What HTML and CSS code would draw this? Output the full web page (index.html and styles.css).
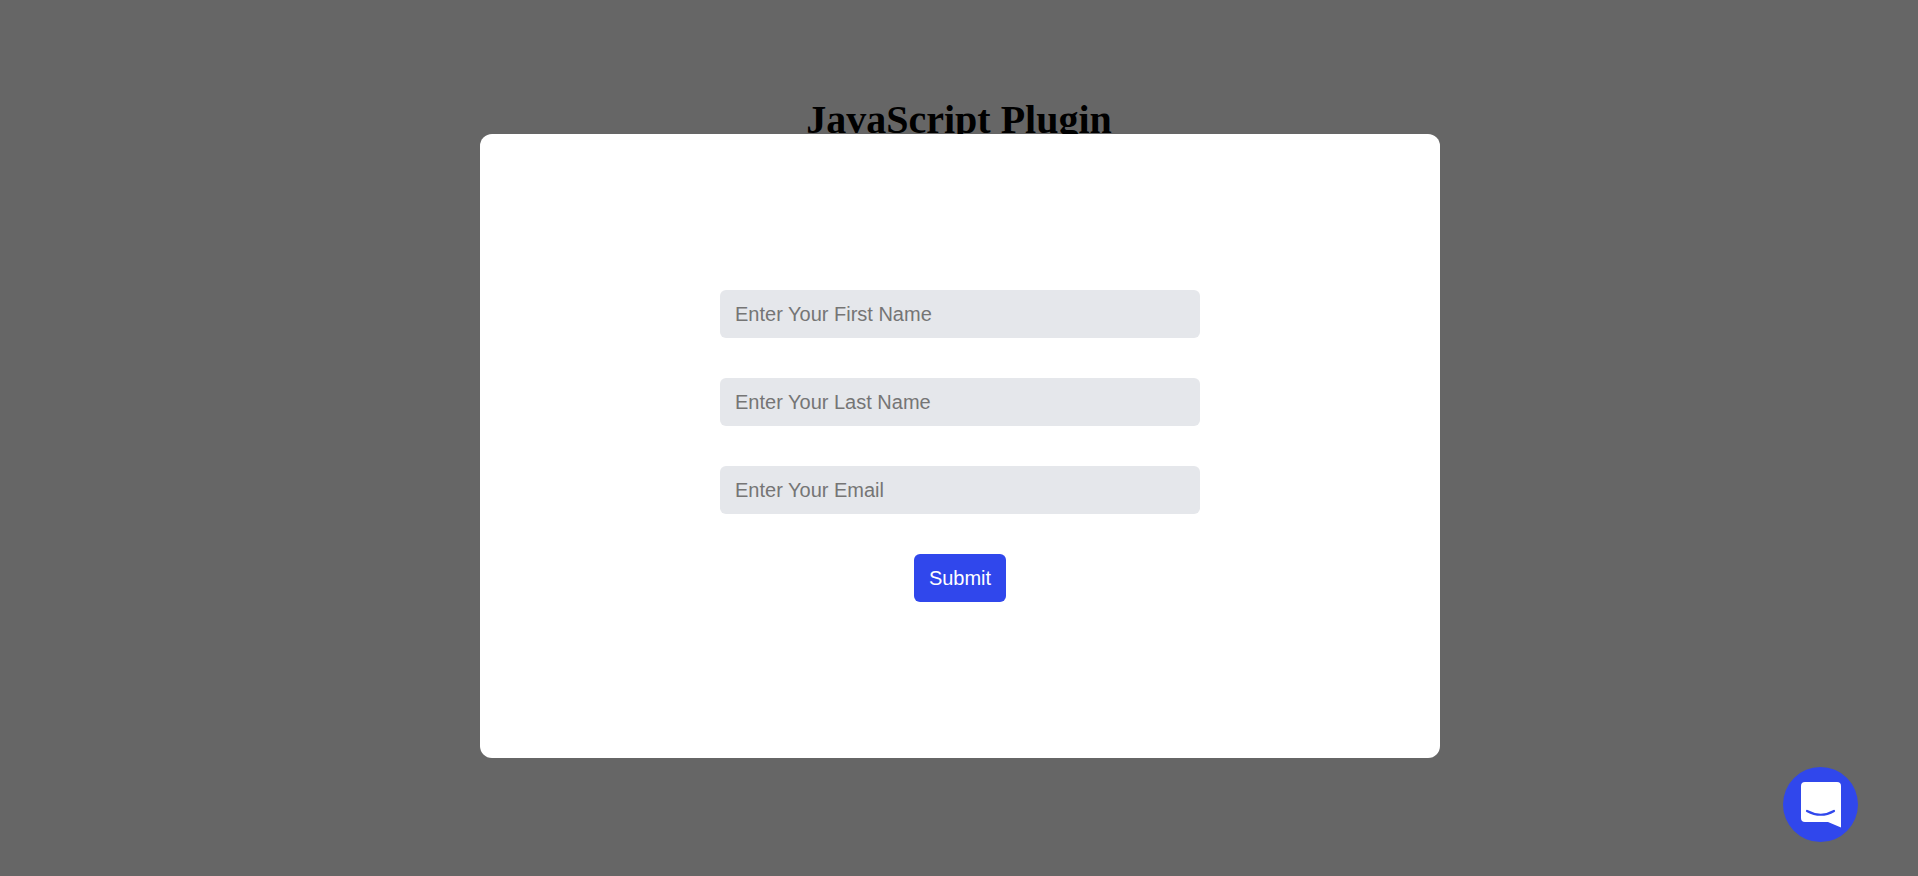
FILE: index.html

```html
<!DOCTYPE html>
<html lang="en">
<head>
  <meta charset="UTF-8">
  <title>JavaScript Plugin</title>
  <link rel="stylesheet" href="styles.css">
</head>
<body>

<h1 class="page-title">JavaScript Plugin</h1>

<div class="overlay">
  <div class="modal">
    <form class="signup-form">
      <input class="field" type="text" placeholder="Enter Your First Name">
      <input class="field" type="text" placeholder="Enter Your Last Name">
      <input class="field" type="email" placeholder="Enter Your Email">
      <button class="submit-btn" type="button">Submit</button>
    </form>
  </div>
</div>

<button class="chat-launcher" type="button" aria-label="Open chat">
  <svg class="chat-icon" viewBox="0 0 40 46" width="40" height="46">
    <path d="M4 0H36A4 4 0 0 1 40 4V45.500L27 40H4A4 4 0 0 1 0 36V4A4 4 0 0 1 4 0Z" fill="#fff"/>
    <path d="M6 29Q20 36.500 33 29" fill="none" stroke="#3047ec" stroke-width="2.200" stroke-linecap="round"/>
  </svg>
</button>

</body>
</html>
```

FILE: styles.css

```css
* {
  box-sizing: border-box;
}
html, body {
  height: 100%;
}
body {
  margin: 0;
  background: #fff;
  color: #000;
  font-family: "Liberation Serif", serif;
  overflow: hidden;
}
.page-title {
  margin: 97px 0 0;
  font-size: 40px;
  line-height: 46px;
  font-weight: bold;
  text-align: center;
}
.overlay {
  position: fixed;
  inset: 0;
  display: flex;
  justify-content: center;
  align-items: flex-start;
  padding: 134px 0 0 2px;
  background: rgba(0, 0, 0, 0.6);
}
.modal {
  width: 960px;
  height: 624px;
  display: flex;
  align-items: center;
  justify-content: center;
  background: #fff;
  border-radius: 12px;
}
.signup-form {
  width: 480px;
  display: flex;
  flex-direction: column;
  align-items: center;
  gap: 40px;
}
.field {
  width: 100%;
  height: 48px;
  padding: 1px 15px 0;
  border: none;
  border-radius: 6px;
  background: #e5e7eb;
  font-family: "Liberation Sans", Arial, sans-serif;
  font-size: 20px;
  color: #111;
}
.field::placeholder {
  color: #757575;
  opacity: 1;
}
.submit-btn {
  height: 48px;
  padding: 1px 15px 0;
  border: none;
  border-radius: 6px;
  background: #3047ec;
  color: #fff;
  font-family: "Liberation Sans", Arial, sans-serif;
  font-size: 20px;
  cursor: pointer;
}
.chat-launcher {
  position: fixed;
  right: 60px;
  bottom: 34px;
  width: 75px;
  height: 75px;
  padding: 0;
  border: none;
  border-radius: 50%;
  background: #3047ec;
  display: flex;
  align-items: center;
  justify-content: center;
  cursor: pointer;
}
.chat-icon {
  display: block;
  margin-top: 1px;
}
```
